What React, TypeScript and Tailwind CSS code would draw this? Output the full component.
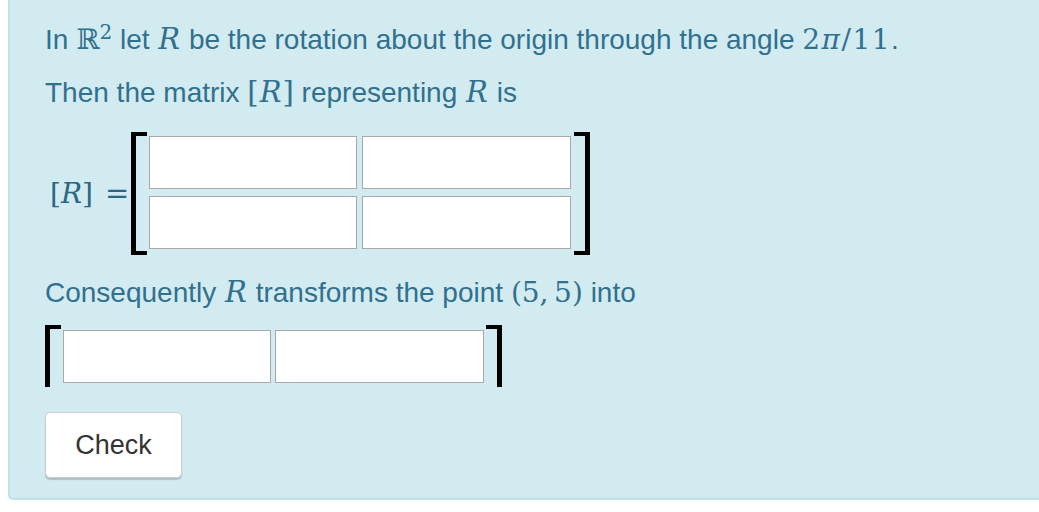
import React from "react";

const Input = ({ w }: { w: string }) => (
  <input
    type="text"
    className={`${w} h-[53px] border border-[#a9a9a9] bg-white outline-none`}
  />
);

const R = () => (
  <span className="mx-[1px] font-['DejaVu_Serif',serif] text-[29px] leading-none italic">R</span>
);

const App = () => {
  return (
    <div className="h-[512px] w-full overflow-hidden bg-white font-['Liberation_Sans',Arial,sans-serif] text-[#31708f]">
      <div className="ml-2 w-[1100px] rounded-bl-[5px] border-b-2 border-l-2 border-[#bce3ec] bg-[#d2ebf0] pt-5 pb-5 pl-[35px]">
        {/* question text */}
        <p className="text-[28px] leading-[40px]">
          In{" "}
          <span className="font-['DejaVu_Serif',serif] text-[28px] leading-none">
            ℝ<sup className="text-[20px]">2</sup>
          </span>{" "}
          let <R /> be the rotation about the origin through the angle{" "}
          <span className="font-['DejaVu_Serif',serif] text-[28px] leading-none tracking-[1.5px]">
            2<i>π</i>/11
          </span>
          .
        </p>
        <p className="mt-[13px] text-[28px] leading-[40px]">
          Then the matrix{" "}
          <span className="font-['DejaVu_Serif',serif] text-[29px] leading-none">
            [<R />]
          </span>{" "}
          representing <R /> is
        </p>

        {/* matrix */}
        <div className="mt-[19px] flex items-center">
          <div className="flex w-[86px] items-center text-[#2a6785]">
            <span className="ml-[5px] font-['DejaVu_Serif',serif] text-[28px] leading-none">
              [<i>R</i>]
            </span>
            <span className="ml-[12px] font-['DejaVu_Serif',serif] text-[29px] leading-none">=</span>
          </div>
          <div className="flex">
            <div className="w-4 border-y-4 border-l-[5px] border-black" />
            <div className="ml-[2px] grid grid-cols-[208px_209px] gap-x-[5px] gap-y-[7px] pt-[4px] pb-[6px]">
              <Input w="w-[208px]" />
              <Input w="w-[209px]" />
              <Input w="w-[208px]" />
              <Input w="w-[209px]" />
            </div>
            <div className="ml-[3px] w-4 border-y-4 border-r-[5px] border-black" />
          </div>
        </div>

        <p className="mt-[18px] text-[28px] leading-[40px]">
          Consequently <R /> transforms the point{" "}
          <span className="font-['DejaVu_Serif',serif] text-[28px] leading-none">(5,{"\u2009"}5)</span> into
        </p>

        {/* vector */}
        <div className="mt-[12px] flex">
          <div className="w-4 border-t-4 border-l-[5px] border-black" />
          <div className="ml-[2px] flex gap-[4px] pt-[5px] pb-[4px]">
            <Input w="w-[208px]" />
            <Input w="w-[209px]" />
          </div>
          <div className="ml-[2px] w-4 border-t-4 border-r-[5px] border-black" />
        </div>

        <button className="mt-[25px] h-[66px] w-[137px] rounded-[5px] border border-[#ccc] bg-white text-[27px] text-[#333] shadow-[0_2px_1px_rgba(0,0,0,0.18)]">
          Check
        </button>
      </div>
    </div>
  );
};

export default App;
